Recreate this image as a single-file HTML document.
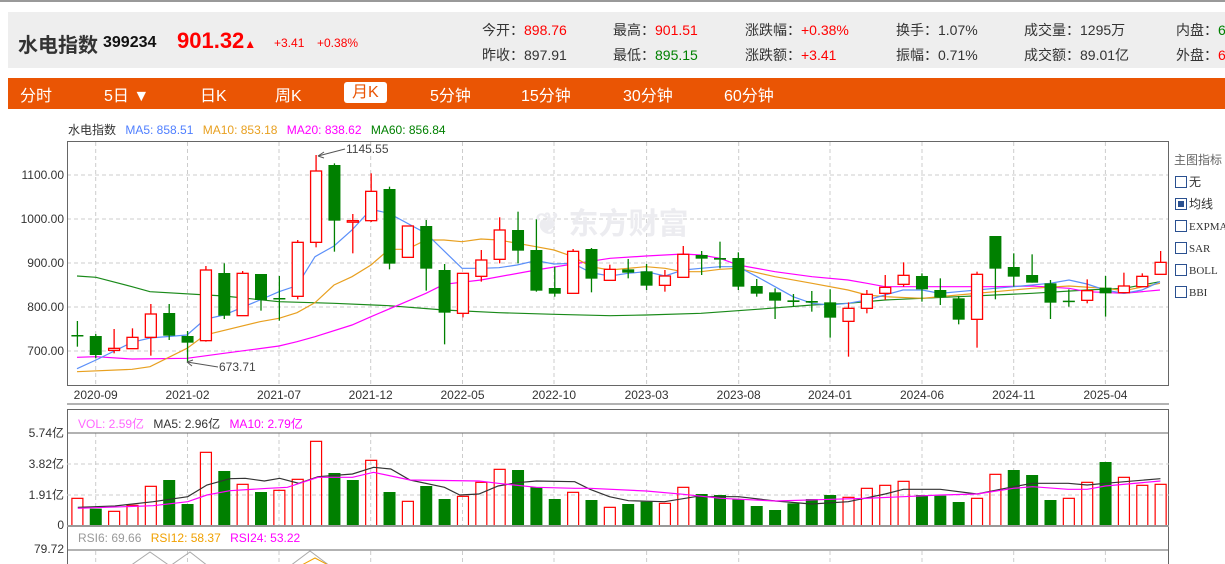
<!DOCTYPE html>
<html><head><meta charset="utf-8">
<style>
*{margin:0;padding:0;box-sizing:border-box}
body{width:1225px;height:564px;overflow:hidden;background:#fff;font-family:"Liberation Sans","Noto Sans CJK SC",sans-serif;position:relative}
.topline{position:absolute;left:0;top:0;width:1225px;height:2px;background:#999}
.info{position:absolute;left:8px;top:12px;width:1217px;height:56px;background:#eeeeee}
.abs{position:absolute;white-space:nowrap}
.nav{position:absolute;left:8px;top:78px;width:1217px;height:31px;background:#ea5504;color:#fff;font-size:16px}
.nav span{position:absolute;top:4px}
.red{color:#f00}.grn{color:#008000}
.q{font-size:14px;color:#333}
</style></head><body>
<div class="topline"></div>
<div class="info">
 <div class="abs" style="left:10px;top:17px;font-size:20px;font-weight:bold;color:#333">水电指数</div>
 <div class="abs" style="left:95px;top:22px;font-size:16px;font-weight:bold;color:#111">399234</div>
 <div class="abs red" style="left:169px;top:16px;font-size:22px;font-weight:bold">901.32<span style="font-size:12px">▲</span></div>
 <div class="abs red" style="left:266px;top:24px;font-size:12px">+3.41</div>
 <div class="abs red" style="left:309px;top:24px;font-size:12px">+0.38%</div>
 <div class="abs q" style="left:474px;top:8px">今开：<span class="red">898.76</span></div>
 <div class="abs q" style="left:474px;top:33px">昨收：897.91</div>
 <div class="abs q" style="left:605px;top:8px">最高：<span class="red">901.51</span></div>
 <div class="abs q" style="left:605px;top:33px">最低：<span class="grn">895.15</span></div>
 <div class="abs q" style="left:737px;top:8px">涨跌幅：<span class="red">+0.38%</span></div>
 <div class="abs q" style="left:737px;top:33px">涨跌额：<span class="red">+3.41</span></div>
 <div class="abs q" style="left:888px;top:8px">换手：1.07%</div>
 <div class="abs q" style="left:888px;top:33px">振幅：0.71%</div>
 <div class="abs q" style="left:1016px;top:8px">成交量：1295万</div>
 <div class="abs q" style="left:1016px;top:33px">成交额：89.01亿</div>
 <div class="abs q" style="left:1168px;top:8px">内盘：<span class="grn">6</span></div>
 <div class="abs q" style="left:1168px;top:33px">外盘：<span class="red">6</span></div>
</div>
<div class="nav">
 <span style="left:12px">分时</span>
 <span style="left:96px">5日 ▼</span>
 <span style="left:192px">日K</span>
 <span style="left:267px">周K</span>
 <span style="left:336px;top:4px;background:#fff;color:#ea5504;border-radius:3px;padding:0 8px;height:21px;line-height:21px">月K</span>
 <span style="left:422px">5分钟</span>
 <span style="left:513px">15分钟</span>
 <span style="left:615px">30分钟</span>
 <span style="left:716px">60分钟</span>
</div>
<div class="abs" style="left:68px;top:121px;font-size:12px;color:#333">水电指数 <span style="color:#4f7fff;margin-left:6px">MA5: 858.51</span> <span style="color:#e8a020;margin-left:6px">MA10: 853.18</span> <span style="color:#f0f;margin-left:6px">MA20: 838.62</span> <span style="color:#008000;margin-left:6px">MA60: 856.84</span></div>
<div class="abs" style="left:1174px;top:151px;font-size:12px;color:#666">主图指标</div>
<svg id="s" width="1225" height="564" style="position:absolute;left:0;top:0" xmlns="http://www.w3.org/2000/svg"></svg>
<div class="abs" style="left:535px;top:199px;font-size:30px;font-weight:bold;color:#ececf0">❦ 东方财富</div>
<div class="abs" style="left:78px;top:415px;font-size:12px"><span style="color:#f6f">VOL: 2.59亿</span> <span style="color:#333;margin-left:6px">MA5: 2.96亿</span> <span style="color:#f0f;margin-left:6px">MA10: 2.79亿</span></div>
<div class="abs" style="left:78px;top:531px;font-size:12px"><span style="color:#999">RSI6: 69.66</span> <span style="color:#f0a000;margin-left:6px">RSI12: 58.37</span> <span style="color:#f0f;margin-left:6px">RSI24: 53.22</span></div>
<script>
var s=document.getElementById('s'),h='';
function L(x1,y1,x2,y2,c,w,d){h+='<line x1="'+x1+'" y1="'+y1+'" x2="'+x2+'" y2="'+y2+'" stroke="'+c+'" stroke-width="'+(w||1)+'"'+(d?' stroke-dasharray="4,3"':'')+'/>';}
function T(x,y,t,a,c,fs,ff){h+='<text x="'+x+'" y="'+y+'" font-size="'+(fs||12)+'" fill="'+(c||'#333')+'" text-anchor="'+(a||'start')+'" font-family="'+(ff||'Liberation Sans,Noto Sans CJK SC,sans-serif')+'">'+t+'</text>';}
var xs=[95.7,187.5,279,370.7,462.5,554,646.6,738.7,830,922,1013.7,1105.4],xl=['2020-09','2021-02','2021-07','2021-12','2022-05','2022-10','2023-03','2023-08','2024-01','2024-06','2024-11','2025-04'];
[175,219,263,307,351].forEach(function(y,i){L(67,y,1169,y,'#ccc',1,1);T(64,y+4,['1100.00','1000.00','900.00','800.00','700.00'][i],'end');});
xs.forEach(function(x,i){L(x,142,x,385,'#ccc',1,1);L(x,433,x,526,'#ccc',1,1);L(x,551,x,564,'#ccc',1,1);T(x,399,xl[i],'middle');});
h+='<rect x="67.5" y="141.5" width="1101" height="244" fill="none" stroke="#666"/>';
L(67,404,1169,404,'#666');
h+='<rect x="67.5" y="409.5" width="1101" height="155" fill="none" stroke="#666"/>';
L(67,433,1169,433,'#666');[464,495].forEach(function(y){L(67,y,1169,y,'#ccc',1,1)});
L(67,550,1169,550,'#666');
T(64,437,'5.74亿','end');T(64,468,'3.82亿','end');T(64,499,'1.91亿','end');T(64,529,'0','end');T(64,553,'79.72','end');
var C=[[585,589,543,620,0],[588,645,582,655,0],[625,631,567,640,1],[592,626,565,626,1],[522,592,492,647,1],[519,587,492,600,0],[588,608,573,668,0],[390,602,378,605,1],[399,527,370,537,0],[400,527,393,527,1],[402,480,402,512,0],[474,477,408,542,0],[307,469,300,478,1],[93,307,45,322,1],[75,242,70,335,0],[242,245,222,340,1],[154,242,100,246,1],[147,371,140,388,0],[258,352,258,352,1],[258,386,240,452,0],[390,518,372,613,0],[400,520,400,532,1],[360,409,330,425,1],[270,358,232,370,1],[270,332,215,370,0],[330,452,237,455,0],[444,461,380,470,0],[334,460,327,460,1],[327,416,324,457,0],[388,421,374,421,1],[388,398,357,415,0],[394,437,372,450,0],[408,436,390,455,1],[343,412,318,412,1],[345,356,333,405,0],[354,359,305,385,0],[354,440,337,450,0],[438,461,417,470,0],[457,482,445,537,0],[481,486,462,500,0],[483,488,453,515,0],[487,533,448,593,0],[505,544,487,650,1],[463,505,450,520,1],[442,460,405,480,1],[406,433,367,440,1],[408,448,400,485,0],[450,472,415,495,0],[475,539,468,553,0],[403,538,395,623,1],[288,386,288,478,0],[381,410,340,440,0],[405,428,343,428,0],[430,488,420,537,0],[482,486,448,500,0],[452,481,418,490,1],[443,460,408,530,0],[438,458,398,458,1],[409,440,400,440,1],[367,403,333,403,1]];
function Y(z){return 140+z/3;}
function poly(p,c,off,w){h+='<polyline fill="none" stroke="'+c+'" stroke-width="'+(w||1.2)+'" points="'+p.map(function(q){return q[0]+','+(off+q[1]/3)}).join(' ')+'"/>';}
poly([[77,408],[96,412],[132,440],[150,455],[224,468],[279,485],[334,490],[389,497],[444,510],[499,518],[554,523],[610,527],[646,525],[701,520],[757,508],[812,495],[848,490],[885,480],[958,470],[1032,460],[1087,450],[1124,445],[1160,425]],'#1a8a1a',140);
poly([[77,652],[96,650],[132,657],[187,655],[224,640],[279,618],[297,605],[315,590],[352,555],[371,530],[426,460],[444,433],[481,420],[536,390],[573,372],[610,355],[646,348],[683,342],[701,345],[720,355],[738,375],[775,395],[812,410],[848,420],[867,430],[885,440],[922,440],[958,440],[995,440],[1032,438],[1069,445],[1087,455],[1124,460],[1160,450]],'#f0f',140);
poly([[77,695],[132,688],[150,680],[187,625],[205,585],[260,545],[279,535],[297,518],[315,488],[334,435],[352,410],[371,375],[389,328],[407,328],[426,300],[444,300],[462,305],[481,297],[499,300],[536,320],[554,330],[573,350],[591,380],[610,390],[628,385],[646,380],[665,385],[683,395],[701,395],[720,388],[738,385],[775,410],[812,430],[848,450],[867,465],[885,470],[922,475],[958,465],[995,455],[1032,445],[1069,438],[1105,445],[1124,452],[1160,430]],'#e8a020',140);
poly([[77,686],[96,660],[132,607],[150,594],[187,585],[205,538],[224,525],[260,480],[279,455],[297,437],[315,350],[334,318],[352,270],[371,208],[389,220],[426,280],[462,385],[481,385],[499,383],[517,375],[536,362],[554,372],[573,370],[591,398],[610,408],[628,400],[646,395],[665,408],[683,390],[701,385],[720,380],[738,380],[757,410],[775,440],[793,470],[812,490],[830,495],[848,490],[867,480],[885,465],[903,450],[922,450],[940,460],[958,455],[977,450],[995,445],[1014,440],[1050,430],[1069,420],[1087,432],[1105,450],[1124,460],[1142,450],[1160,425]],'#5b8ff9',140);
C.forEach(function(c,i){var x=77.4+18.36*i,col=c[4]?'#f00':'#008000';
 L(x,Y(c[2]),x,Y(c[3]),col,1.3);
 var t=Y(c[0]),b=Y(c[1]);if(b-t<1.5)b=t+1.5;
 if(c[4])h+='<rect x="'+(x-5.5)+'" y="'+t+'" width="11" height="'+(b-t)+'" fill="#fff" stroke="#f00" stroke-width="1.3"/>';
 else h+='<rect x="'+(x-6)+'" y="'+t+'" width="12" height="'+(b-t)+'" fill="#008000"/>';
});
L(318,156,345,149,'#555');h+='<path d="M318 156 l6 -4 M318 156 l6 2" stroke="#555" fill="none"/>';T(346,153,'1145.55','start','#444');
L(187,362,218,367,'#555');h+='<path d="M187 362 l6 -2 M187 362 l5 4" stroke="#555" fill="none"/>';T(219,371,'673.71','start','#444');
var V=[[295,1],[326,0],[334,1],[316,1],[259,1],[240,0],[312,0],[157,1],[213,0],[253,1],[276,0],[271,1],[238,1],[124,1],[219,0],[240,0],[181,1],[276,0],[304,1],[258,0],[297,0],[289,1],[247,1],[208,1],[210,0],[261,0],[297,0],[277,1],[300,0],[322,1],[312,0],[305,0],[310,1],[262,1],[282,0],[285,0],[298,0],[318,0],[330,0],[310,0],[297,0],[285,0],[292,1],[265,1],[256,1],[244,1],[285,0],[287,0],[306,0],[295,1],[223,1],[210,0],[225,0],[300,0],[295,1],[247,1],[186,0],[232,1],[256,1],[253,1]];
V.forEach(function(v,i){var x=77.4+18.36*i,t=400+v[0]/3;
 if(v[1])h+='<rect x="'+(x-5.5)+'" y="'+t+'" width="11" height="'+(526-t)+'" fill="none" stroke="#f00" stroke-width="1.2"/>';
 else h+='<rect x="'+(x-6)+'" y="'+t+'" width="12" height="'+(526-t)+'" fill="#008000"/>';});
L(67,526,1169,526,'#999',2);
function vp(a,b){return a.map(function(q){return [q[0]/2.61,q[1]]}).concat(b.map(function(q){return [590+q[0]/2.47,q[1]]}));}
poly(vp([[203,322],[300,318],[400,305],[490,290],[540,255],[600,236],[640,235],[690,243],[730,235],[780,250],[830,230],[920,222],[975,202],[1020,207],[1070,240],[1160,262],[1200,285],[1250,282],[1300,258],[1350,248],[1400,243],[1500,245]],[[0,268],[48,290],[95,302],[184,305],[260,290],[367,290],[458,303],[547,312],[638,305],[729,282],[774,268],[865,268],[956,282],[1046,260],[1093,250],[1181,250],[1228,255],[1273,250],[1409,236]]),'#333',400);
poly(vp([[203,325],[400,317],[490,305],[540,285],[600,272],[700,265],[750,262],[830,232],[920,232],[975,217],[1070,240],[1250,243],[1300,250],[1400,262],[1500,265]],[[0,265],[139,273],[231,283],[322,295],[458,303],[594,298],[683,295],[774,290],[865,285],[956,282],[1046,265],[1093,260],[1181,268],[1228,268],[1273,258],[1409,243]]),'#f0f',400);
h+='<polyline fill="none" stroke="#aaa" points="130,566 150,552 170,566 190,552 208,566"/>';
h+='<polyline fill="none" stroke="#aaa" points="290,566 310,551 330,566"/>';
h+='<polyline fill="none" stroke="#f0a000" points="300,566 315,558 330,566"/>';
var lb=['无','均线','EXPMA','SAR','BOLL','BBI'];
lb.forEach(function(t,i){var y=176+i*22;h+='<rect x="1175.5" y="'+(y+0.5)+'" width="11" height="11" fill="#fff" stroke="#2a5090"/>';if(i==1)h+='<rect x="1178" y="'+(y+3)+'" width="6" height="6" fill="#2a5090"/>';if(i>1)T(1189,y+10,t,'start','#333',11,'Liberation Serif,serif');else T(1189,y+10,t,'start','#333',12);});
s.innerHTML=h;
</script>
</body></html>
